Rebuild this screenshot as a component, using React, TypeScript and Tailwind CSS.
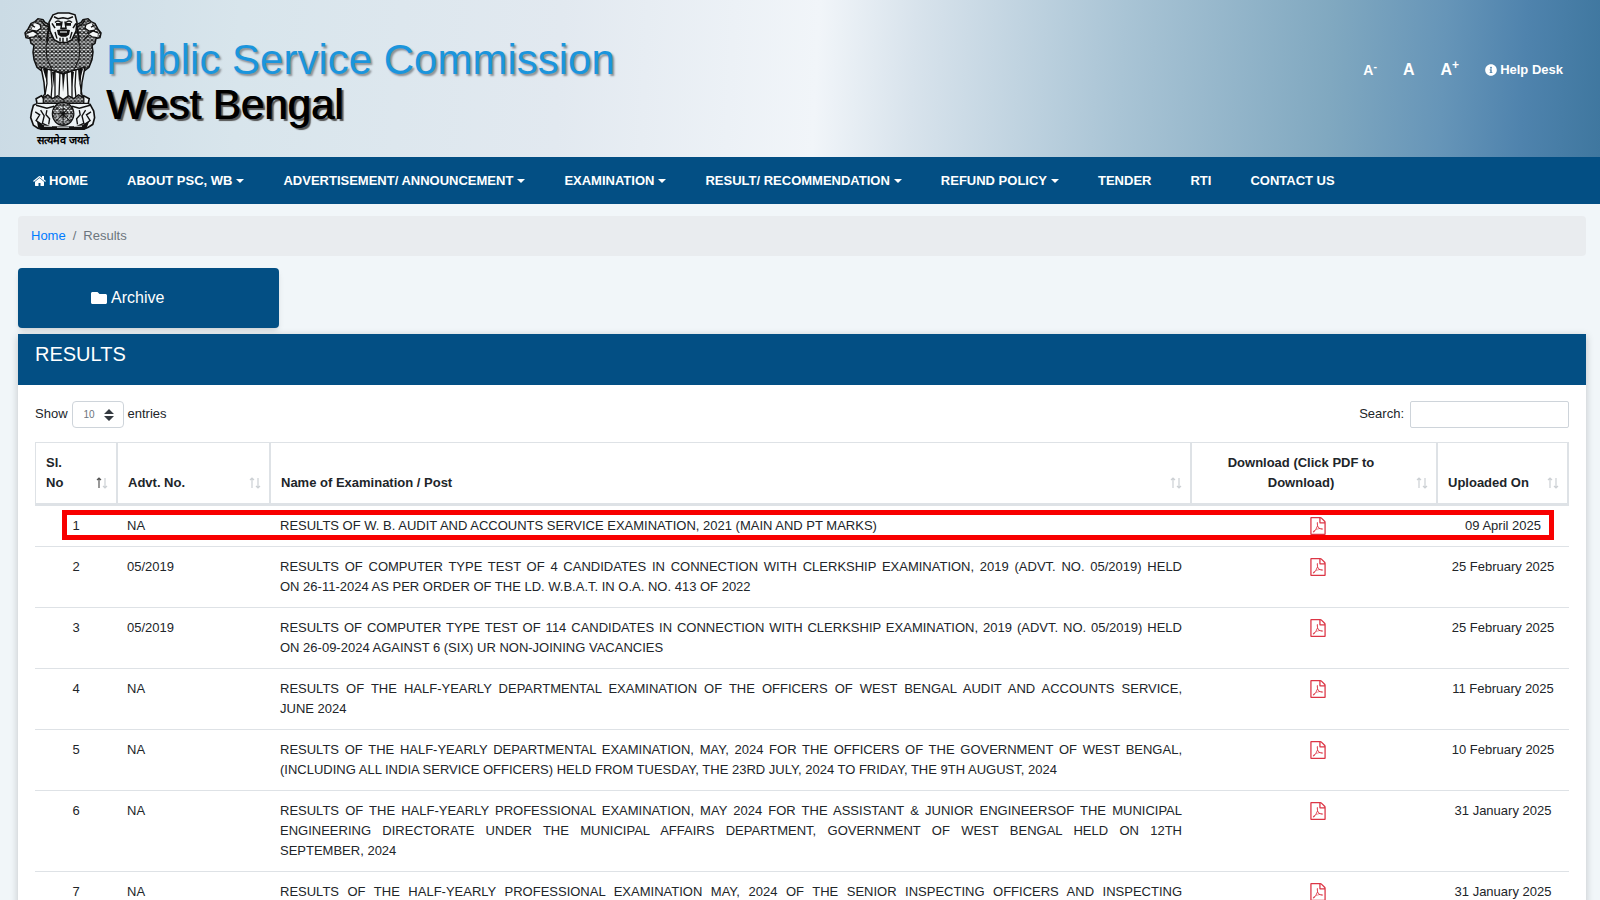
import React, { useState } from 'react';
import { FaFolder, FaInfoCircle } from 'react-icons/fa';

interface NavItem {
    label: string;
    dropdown?: boolean;
}

interface Result {
    id: number;
    advtNo: string;
    name: string;
    uploadedOn: string;
    highlighted?: boolean;
    fullLine?: boolean;
}

const navItems: NavItem[] = [
    { label: 'ABOUT PSC, WB', dropdown: true },
    { label: 'ADVERTISEMENT/ ANNOUNCEMENT', dropdown: true },
    { label: 'EXAMINATION', dropdown: true },
    { label: 'RESULT/ RECOMMENDATION', dropdown: true },
    { label: 'REFUND POLICY', dropdown: true },
    { label: 'TENDER' },
    { label: 'RTI' },
    { label: 'CONTACT US' },
];

// Dates inside the names use non-breaking spaces so they stay on one line
const results: Result[] = [
    { id: 1, advtNo: 'NA', name: 'RESULTS OF W. B. AUDIT AND ACCOUNTS SERVICE EXAMINATION, 2021 (MAIN AND PT MARKS)', uploadedOn: '09 April 2025', highlighted: true },
    { id: 2, advtNo: '05/2019', name: 'RESULTS OF COMPUTER TYPE TEST OF 4 CANDIDATES IN CONNECTION WITH CLERKSHIP EXAMINATION, 2019 (ADVT. NO. 05/2019) HELD ON\u00a026-11-2024 AS PER ORDER OF THE LD. W.B.A.T. IN O.A. NO. 413 OF 2022', uploadedOn: '25 February 2025' },
    { id: 3, advtNo: '05/2019', name: 'RESULTS OF COMPUTER TYPE TEST OF 114 CANDIDATES IN CONNECTION WITH CLERKSHIP EXAMINATION, 2019 (ADVT. NO. 05/2019) HELD ON\u00a026-09-2024 AGAINST 6 (SIX) UR NON-JOINING VACANCIES', uploadedOn: '25 February 2025' },
    { id: 4, advtNo: 'NA', name: 'RESULTS OF THE HALF-YEARLY DEPARTMENTAL EXAMINATION OF THE OFFICERS OF WEST BENGAL AUDIT AND ACCOUNTS SERVICE, JUNE\u00a02024', uploadedOn: '11 February 2025' },
    { id: 5, advtNo: 'NA', name: 'RESULTS OF THE HALF-YEARLY DEPARTMENTAL EXAMINATION, MAY, 2024 FOR THE OFFICERS OF THE GOVERNMENT OF WEST BENGAL, (INCLUDING ALL INDIA SERVICE OFFICERS) HELD FROM TUESDAY, THE 23RD JULY, 2024 TO FRIDAY, THE 9TH AUGUST, 2024', uploadedOn: '10 February 2025' },
    { id: 6, advtNo: 'NA', name: 'RESULTS OF THE HALF-YEARLY PROFESSIONAL EXAMINATION, MAY 2024 FOR THE ASSISTANT & JUNIOR ENGINEERSOF THE MUNICIPAL ENGINEERING DIRECTORATE UNDER THE MUNICIPAL AFFAIRS DEPARTMENT, GOVERNMENT OF WEST BENGAL HELD ON 12TH SEPTEMBER,\u00a02024', uploadedOn: '31 January 2025' },
    { id: 7, advtNo: 'NA', name: 'RESULTS OF THE HALF-YEARLY PROFESSIONAL EXAMINATION MAY, 2024 OF THE SENIOR INSPECTING OFFICERS AND INSPECTING', uploadedOn: '31 January 2025', fullLine: true },
];

const HomeIcon: React.FC = () => (
    <svg viewBox="0 0 1664 1792" className="h-[14px] w-[13px]" fill="currentColor" aria-hidden="true">
        <path d="M1408 992v480q0 26-19 45t-45 19h-384v-384h-256v384h-384q-26 0-45-19t-19-45v-480q0-1 .5-3t.5-3l575-474 575 474q1 2 1 6zm223-69l-62 74q-8 9-21 11h-3q-13 0-21-7l-692-577-692 577q-12 8-24 7-13-2-21-11l-62-74q-8-10-7-23.5t11-21.5l719-599q32-26 76-26t76 26l244 204v-195q0-14 9-23t23-9h192q14 0 23 9t9 23v408l219 182q10 8 11 21.5t-7 23.5z" />
    </svg>
);

const PdfIcon: React.FC = () => (
    <svg viewBox="0 0 1536 1792" className="h-[18px] w-4" fill="currentColor" aria-hidden="true">
        <path d="M1468 380q28 28 48 76t20 88v1152q0 40-28 68t-68 28h-1344q-40 0-68-28t-28-68v-1600q0-40 28-68t68-28h896q40 0 88 20t76 48zm-444-244v376h376q-10-29-22-41l-313-313q-12-12-41-22zm384 1528v-1024h-416q-40 0-68-28t-28-68v-416h-768v1536h1280zm-514-593q33 26 84 56 59-7 117-7 147 0 177 49 16 22 2 52 0 1-1 2l-2 2v1q-6 38-71 38-48 0-115-20t-130-53q-221 24-392 83-153 262-242 262-15 0-28-7l-24-12q-1-1-6-5-10-10-6-36 9-40 56-91.5t132-96.5q14-9 23 6 2 2 2 4 52-85 107-197 68-136 104-262-24-82-30.5-159.5t6.5-127.5q11-40 42-40h22q23 0 35 15 18 21 9 68-2 6-4 8 1 3 1 8v30q-2 123-14 192 55 164 146 238zm-576 411q52-24 137-158-51 40-87.5 84t-49.5 74zm398-920q-15 42-2 132 1-7 7-44 0-3 7-43 1-4 4-8-1-1-1-2-1-2-1-3-1-22-13-36 0 1-1 2v2zm-124 661q135-54 284-81-2-1-13-9.5t-16-13.5q-76-67-127-176-27 86-83 197-30 56-45 83zm646-16q-24-24-140-24 76 28 124 28 14 0 18-1 0-1-2-3z" />
    </svg>
);

const Caret: React.FC = () => (
    <span className="ml-1 inline-block border-x-4 border-t-4 border-x-transparent border-t-current align-middle" />
);

// Lion capital with the motto below it
const Emblem: React.FC = () => (
    <svg viewBox="0 0 78 125" preserveAspectRatio="none" className="h-[119px] w-[78px] shrink-0" role="img" aria-label="Emblem">
        <defs>
            <pattern id="mane" width="4" height="4" patternUnits="userSpaceOnUse">
                <rect width="4" height="4" fill="#f2f6f8" />
                <path d="M0 0q0 2.400 2 3.200q2-.8 2-3.200M-2 2q0 2.400 2 3.200M4 5.200q2-.8 2-3.200M2 0v1.500" fill="none" stroke="#0a0a0a" strokeWidth="1.100" />
            </pattern>
        </defs>
        {/* side lions */}
        <path d="M27 14l-6-3-2-3-5-1-3 3-4 2-3 6-3 4 1 5 4 1 1 5 3 2-1 7 1 8 3 8 6 5 9-1 4-12z" fill="url(#mane)" stroke="#111" strokeWidth="1.500" />
        <path d="M51 14l6-3 2-3 5-1 3 3 4 2 3 6 3 4-1 5-4 1-1 5-3 2 1 7-1 8-3 8-6 5-9-1-4-12z" fill="url(#mane)" stroke="#111" strokeWidth="1.500" />
        <path d="M11 11l5 2 1 4-4 3-6-1M4 22l5-2 5 3-4 3-5 1M67 11l-5 2-1 4 4 3 6-1M74 22l-5-2-5 3 4 3 5 1" fill="#f5f8f9" stroke="#111" strokeWidth="1.300" />
        <path d="M17 9l4 5 5 2M61 9l-4 5-5 2M8 14l3 2M70 14l-3 2M14 25l4 4M64 25l-4 4" fill="none" stroke="#111" strokeWidth="1.400" />
        {/* shadow between the manes and the chest */}
        <path d="M25 15l-2 14 3 14 6 10M53 15l2 14-3 14-6 10" fill="none" stroke="#111" strokeWidth="2" />
        {/* front lion */}
        <path d="M25 27l-3 9 1 13 5 12 11 3 11-3 5-12 1-13-3-9z" fill="url(#mane)" stroke="#111" />
        <path d="M29 3l5-2h11l6 2 2 8-1 9-4 9-5 3h-8l-5-3-4-9-1-9z" fill="#eef3f5" stroke="#111" strokeWidth="1.600" />
        <path d="M30 5l4 2 5-1 5 1 5-2M31 11q3-3 6 0M42 11q3-3 6 0M38 10l-1 7h5l-1-7M28 12l3 5M52 12l-3 5" fill="none" stroke="#111" strokeWidth="1.500" />
        <path d="M32 13h5M42 13h5" stroke="#111" strokeWidth="3" />
        <path d="M33 19l5-1h3l5 1-1 5-3 2h-5l-3-2z" fill="#111" />
        <path d="M36 21h7" stroke="#eef3f5" strokeWidth="1.200" />
        <path d="M31 21l2 7M48 21l-2 7M36 27v4M39 27v5M43 27v4" stroke="#111" strokeWidth="1.400" />
        {/* legs */}
        <path d="M17 58l3 16 1 12-6 8h48l-6-8 1-12 3-16-10 3-12 4-12-4z" fill="#f3f7f8" stroke="#111" strokeWidth="1.500" />
        <path d="M22 60l1 15-2 12M27 60l1 18-1 13M31 62v28M36 63l-1 25M43 63l1 25M48 62v28M52 60l-1 18 1 13M57 60l-1 15 2 12" fill="none" stroke="#111" strokeWidth="1.300" />
        <path d="M28 63l2 16 1-16zM47 63l1 16 2-16zM38 64l1 20 2-20zM19 60l4 14 1-14zM59 60l-4 14-1-14z" fill="#111" />
        {/* abacus */}
        <g transform="translate(4 0) scale(.9 1)">
            <path d="M15 88l-6 3 1 5-4 2-2 7-1 6 3 8 5 3 4 1h47l5-2 5-3 2-7-1-7-4-7-2-1 1-5-6-3-3 6H20z" fill="#edf3f5" stroke="#111" strokeWidth="1.800" />
            <path d="M17 90l5-3 5 4 6-3 6 4 6-4 6 3 5-4 6 3v6H17z" fill="url(#mane)" stroke="#111" strokeWidth="1.400" />
            <path d="M11 96h56M9 98l12 3 8-2M69 98l-12 3-8-2M8 105l5 3-4 6 6 4M14 103l4 6-2 8 7 3M21 103l-1 5 4 4-1 6M70 105l-5 3 4 6-6 4M64 103l-4 6 2 8-7 3M57 103l1 5-4 4 1 6" fill="none" stroke="#111" strokeWidth="1.500" />
            <circle cx="39" cy="107" r="12" fill="url(#mane)" stroke="#111" strokeWidth="1.300" />
            <circle cx="39" cy="107" r="7" fill="none" stroke="#eef3f5" strokeWidth="1" />
            <path d="M39 96v22M28 107h22M31 99l16 16M47 99l-16 16" stroke="#111" />
            <circle cx="39" cy="107" r="2" fill="#111" />
        </g>
        <path d="M13 115l7 4 9 1h20l9-1 7-4-2 6-3 3H17l-3-3z" fill="#111" />
        <path d="M20 120h8M33 121h12M50 120h8" stroke="#edf3f5" strokeWidth="1" />
    </svg>
);

const SortArrows: React.FC<{ ascending?: boolean }> = ({ ascending }) => (
    <svg viewBox="0 0 12 12" className="absolute right-2 bottom-[14px] h-3 w-3" fill="none" strokeWidth="1.200" aria-hidden="true">
        <path d="M3 11V1M1 3l2-2 2 2" stroke={ascending ? '#555' : '#ccd0d4'} />
        <path d="M9 1v10M7 9l2 2 2-2" stroke="#ccd0d4" />
    </svg>
);

const App: React.FC = () => {
    const [pageSize, setPageSize] = useState('10');
    const [search, setSearch] = useState('');

    const visible = results.filter(r => r.name.toLowerCase().includes(search.toLowerCase()));
    const th = 'relative border-t border-r-2 border-b-3 border-[#dee2e6] py-[10px] pl-[10px] align-bottom font-bold';
    const td = 'border-b border-[#dee2e6] py-[10px] pr-[10px] pl-[9px] align-top';

    return (
        <div className="min-h-screen bg-[#f1f6f9] font-['Liberation_Sans',Arial,sans-serif] text-[13px] leading-5 text-[#212529]">
            <header className="flex h-[157px] items-start justify-between bg-[linear-gradient(93deg,#cbdbe5_0%,#d8e5ec_15%,#e2e9f0_35%,#f1f5f9_51%,#d8e3ec_57%,#a9c4d5_70%,#80a8c0_83%,#6695b8_90%,#4f83ad_95%,#3f779f_100%)] pt-3 pr-[37px] pl-6">
                <div className="flex">
                    <div className="flex flex-col items-center">
                        <Emblem />
                        <span className="pt-[2px] text-[11px] leading-[14px] font-bold text-black">सत्यमेव जयते</span>
                    </div>
                    <h1 className="ml-1 pt-[25px] text-[42px] leading-[45px]">
                        <span className="block text-[#1b95dc] [text-shadow:2px_2px_2px_#8a8f94]">Public Service Commission</span>
                        <span className="block text-black [text-shadow:1px_0_0_#000,3px_2px_1px_#555]">West Bengal</span>
                    </h1>
                </div>
                <div className="flex items-center pt-[46px] font-bold text-white">
                    <button type="button" className="text-sm">A<sup>-</sup></button>
                    <button type="button" className="ml-[26px] text-base">A</button>
                    <button type="button" className="ml-[26px] text-base">A<sup>+</sup></button>
                    <a href="#help" className="ml-[26px] flex items-center gap-[3px]">
                        <FaInfoCircle className="h-3 w-3" />
                        Help Desk
                    </a>
                </div>
            </header>

            <nav className="flex h-[47px] items-center gap-[39px] bg-[#034f84] pl-[33px] font-bold text-white">
                <a href="#home" className="flex items-center gap-[3px]">
                    <HomeIcon />
                    HOME
                </a>
                {navItems.map(item => (
                    <a key={item.label} href="#nav" className="whitespace-nowrap">
                        {item.label}
                        {item.dropdown && <Caret />}
                    </a>
                ))}
            </nav>

            <main className="pt-3 pr-[14px] pl-[18px]">
                <ol className="flex rounded-sm bg-[#e9ecef] px-[13px] py-[10px]">
                    <li><a href="#home" className="text-[#007bff]">Home</a></li>
                    <li className="text-[#6c757d]"><span className="px-[7px]">/</span>Results</li>
                </ol>

                <a href="#archive" className="mt-3 flex h-[60px] w-[261px] items-center gap-1 rounded-sm bg-[#034f84] pl-[73px] text-base text-white shadow-md">
                    <FaFolder className="h-4 w-4" />
                    Archive
                </a>

                <section className="mt-[6px] bg-white shadow-[0_2px_8px_rgba(0,0,0,0.2)]">
                    <h2 className="h-[51px] bg-[#034f84] px-[17px] pt-[10px] text-xl leading-5 text-white">RESULTS</h2>
                    <div className="px-[17px] pt-4">
                        <div className="flex justify-between">
                            <label className="flex">
                                <span className="pt-[3px]">Show</span>
                                <span className="relative mx-1">
                                    <select
                                        value={pageSize}
                                        onChange={(e) => setPageSize(e.target.value)}
                                        className="h-[27px] w-[52px] appearance-none rounded border border-[#ced4da] bg-white pl-[11px] text-[10px] text-[#6c757d]"
                                    >
                                        <option>10</option>
                                        <option>25</option>
                                        <option>50</option>
                                        <option>100</option>
                                    </select>
                                    <svg viewBox="0 0 10 12" className="pointer-events-none absolute top-2 right-[10px] h-3 w-[10px]" fill="#343a40" aria-hidden="true">
                                        <path d="M5 0l5 5H0zM5 12L0 7h10z" />
                                    </svg>
                                </span>
                                <span className="pt-[3px]">entries</span>
                            </label>
                            <label className="flex">
                                <span className="pt-[3px]">Search:</span>
                                <input
                                    type="search"
                                    value={search}
                                    onChange={(e) => setSearch(e.target.value)}
                                    className="ml-[6px] h-[27px] w-[159px] rounded-xs border border-[#ced4da] bg-white px-2"
                                />
                            </label>
                        </div>

                        <table className="mt-[14px] w-full table-fixed border-separate border-spacing-0">
                            <colgroup>
                                <col className="w-[83px]" />
                                <col className="w-[153px]" />
                                <col />
                                <col className="w-[246px]" />
                                <col className="w-[131px]" />
                            </colgroup>
                            <thead>
                                <tr>
                                    <th className={`${th} border-l pr-[30px] text-left`}>Sl.<br />No<SortArrows ascending /></th>
                                    <th className={`${th} pr-[30px] text-left`}>Advt. No.<SortArrows /></th>
                                    <th className={`${th} pr-[30px] text-left`}>Name of Examination / Post<SortArrows /></th>
                                    <th className={`${th} pr-9 text-center`}>Download (Click PDF to Download)<SortArrows /></th>
                                    <th className={`${th} pr-[30px] text-left whitespace-nowrap`}>Uploaded On<SortArrows /></th>
                                </tr>
                            </thead>
                            <tbody>
                                {visible.map(row => (
                                    <tr key={row.id} className="relative">
                                        <td className={`${td} text-center`}>
                                            {row.id}
                                            {row.highlighted && (
                                                <span className="pointer-events-none absolute top-1 right-[15px] bottom-[7px] left-[27px] z-10 border-5 border-[#f80000]" />
                                            )}
                                        </td>
                                        <td className={td}>{row.advtNo}</td>
                                        <td className={`${td} text-justify ${row.fullLine ? '[text-align-last:justify]' : ''}`}>{row.name}</td>
                                        <td className={td}>
                                            <a href="#pdf" aria-label="Download PDF" className="flex h-5 items-center justify-center pl-[6px] text-[#dc3545]">
                                                <PdfIcon />
                                            </a>
                                        </td>
                                        <td className={`${td} text-center whitespace-nowrap`}>{row.uploadedOn}</td>
                                    </tr>
                                ))}
                            </tbody>
                        </table>
                    </div>
                </section>
            </main>
        </div>
    );
};

export default App;
